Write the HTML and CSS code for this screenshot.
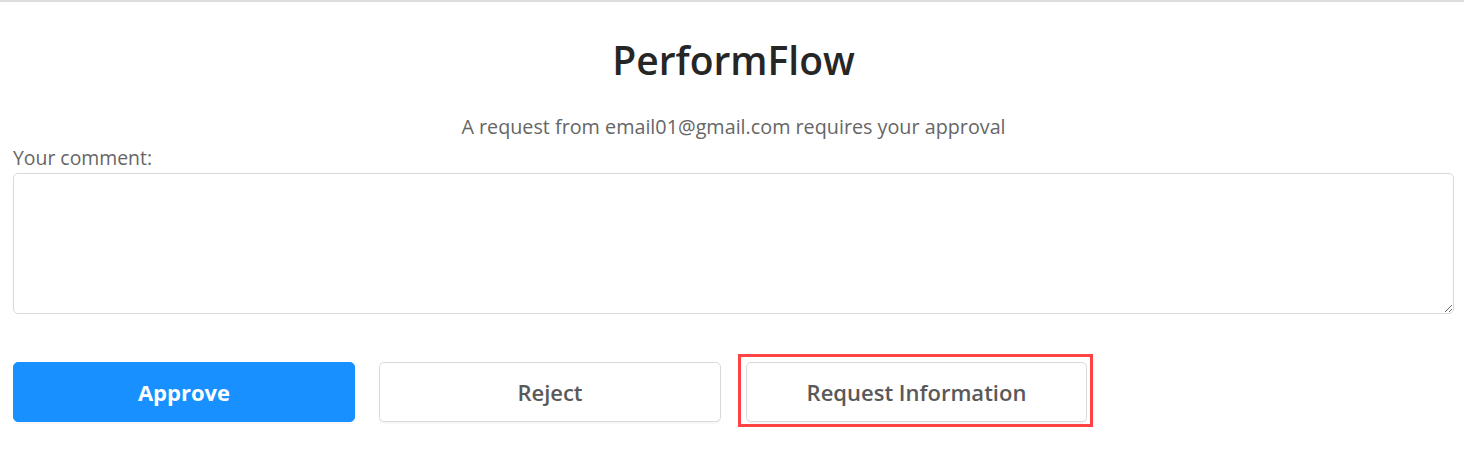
FILE: index.html
```html
<!DOCTYPE html>
<html lang="en">
<head>
<meta charset="utf-8">
<title>PerformFlow</title>
<link rel="stylesheet" href="styles.css">
</head>
<body>
<div class="page">
  <h1 class="title">PerformFlow</h1>
  <p class="subtitle">A request from email01@gmail.com requires your approval</p>
  <label class="label" for="comment">Your comment:</label>
  <textarea id="comment" class="comment"></textarea>
  <div class="actions">
    <button class="btn btn-primary">Approve</button>
    <button class="btn">Reject</button>
    <div class="highlight">
      <button class="btn">Request Information</button>
    </div>
  </div>
</div>
</body>
</html>
```
FILE: styles.css
```css
* { box-sizing: border-box; }
html, body { margin: 0; padding: 0; background: #fff; }
body {
  font-family: "Open Sans", "Noto Sans", sans-serif;
  color: rgba(0,0,0,0.65);
}
.page {
  border-top: 2px solid #dddddd;
  padding: 0 10px 0 13px;
  display: flex;
  flex-direction: column;
}
.title {
  margin: 32px 0 0;
  text-align: center;
  font-size: 39px;
  line-height: 52px;
  font-weight: 600;
  color: #262626;
}
.subtitle {
  margin: 29px 0 0;
  text-align: center;
  font-size: 19.75px;
  line-height: 24px;
  color: #666;
}
.label {
  margin-top: 7px;
  font-size: 19.4px;
  line-height: 24px;
  color: #666;
}
.comment {
  margin-top: 3px;
  width: 1441px;
  height: 141px;
  border: 1px solid #d9d9d9;
  border-radius: 5px;
  resize: vertical;
  font-family: inherit;
  padding: 4px 11px;
}
.actions {
  margin-top: 48px;
  display: flex;
  align-items: flex-start;
  gap: 24px;
}
.btn {
  width: 342px;
  height: 60px;
  border: 1px solid #d9d9d9;
  border-radius: 5px;
  background: #fff;
  font-family: "Open Sans", "Noto Sans", sans-serif;
  font-size: 22px;
  font-weight: 600;
  color: #595959;
  box-shadow: 0 2px 0 rgba(0,0,0,0.03);
  padding: 0;
}
.btn-primary {
  background: #1890ff;
  border-color: #1890ff;
  color: #fff;
  font-weight: 700;
}
.highlight {
  margin: -8px 0 0 -7px;
  padding: 5px 3px 2px 5px;
  border: 3px solid #ff4242;
  display: flex;
}
.highlight .btn { width: 341px; }
```
